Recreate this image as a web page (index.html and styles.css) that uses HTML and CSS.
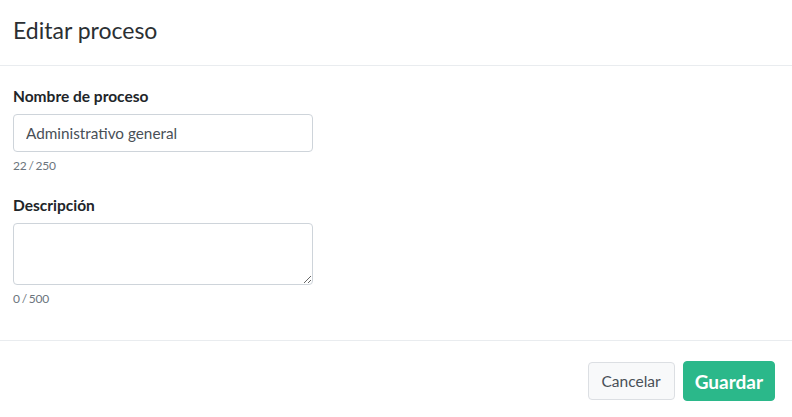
FILE: index.html
```html
<!DOCTYPE html>
<html lang="es">
<head>
<meta charset="utf-8">
<title>Editar proceso</title>
<link rel="stylesheet" href="styles.css">
</head>
<body>
<div class="modal">
  <header class="modal-header">
    <h5 class="modal-title">Editar proceso</h5>
  </header>
  <main class="modal-body">
    <div class="field">
      <label class="label" for="nombre">Nombre de proceso</label>
      <input class="control" id="nombre" type="text" value="Administrativo general">
      <small class="counter">22 / 250</small>
    </div>
    <div class="field">
      <label class="label" for="desc">Descripción</label>
      <textarea class="control area" id="desc"></textarea>
      <small class="counter">0 / 500</small>
    </div>
  </main>
  <footer class="modal-footer">
    <button class="btn btn-light" type="button">Cancelar</button>
    <button class="btn btn-primary" type="button">Guardar</button>
  </footer>
</div>
</body>
</html>
```
FILE: styles.css
```css
* { box-sizing: border-box; }
html, body { margin: 0; background: #fff; }
body {
  font-family: Lato, "Open Sans", sans-serif;
  color: #212529;
  width: 792px;
  height: 417px;
  overflow: hidden;
}
.modal { display: flex; flex-direction: column; }
.modal-header {
  height: 66px;
  padding: 0 13px;
  display: flex;
  align-items: center;
  border-bottom: 1px solid #e9ecef;
}
.modal-title {
  margin: 0;
  font-size: 23px;
  font-weight: 400;
  line-height: 1;
  color: #2b2f33;
  position: relative;
  top: -2px;
}
.modal-body {
  padding: 20px 13px 34px;
  display: flex;
  flex-direction: column;
  gap: 22px;
  border-bottom: 1px solid #e9ecef;
}
.field { display: flex; flex-direction: column; align-items: flex-start; }
.label {
  font-size: 15.5px;
  font-weight: 700;
  line-height: 20px;
  margin-bottom: 8px;
  color: #212529;
}
.control {
  width: 300px;
  height: 38px;
  border: 1px solid #ced4da;
  border-radius: 4px;
  padding: 0 12px;
  font-family: inherit;
  font-size: 15.3px;
  color: #495057;
  background: #fff;
  outline: none;
}
.area { height: 62px; resize: vertical; display: block; }
.counter {
  margin-top: 7px;
  font-size: 12px;
  line-height: 14px;
  letter-spacing: -0.2px;
  word-spacing: -1px;
  color: #6c757d;
}
.modal-footer {
  display: flex;
  justify-content: flex-end;
  align-items: center;
  gap: 8px;
  padding: 20px 17px 0;
}
.btn {
  font-family: inherit;
  border-radius: 4px;
  cursor: pointer;
}
.btn-light {
  height: 38px;
  padding: 0 13px;
  font-size: 15.5px;
  color: #495057;
  background: #f8f9fa;
  border: 1px solid #dcdfe3;
}
.btn-primary {
  height: 40px;
  padding: 0 11px;
  font-size: 19px;
  font-weight: 700;
  color: #fff;
  background: #2bb88a;
  border: 1px solid #2bb88a;
}
```
